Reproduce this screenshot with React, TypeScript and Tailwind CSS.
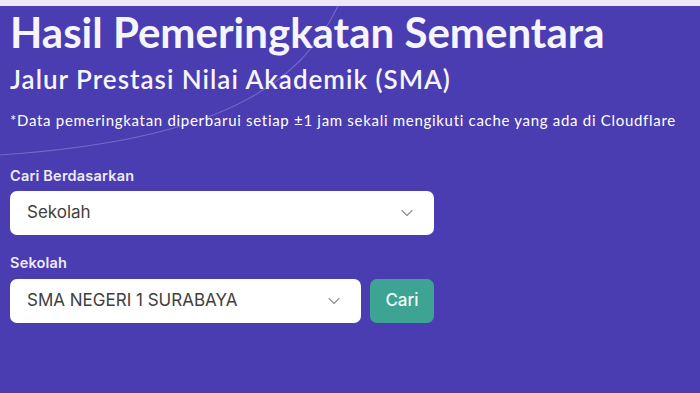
import React from 'react';
import { ChevronDown } from 'lucide-react';

function SelectBox({ value, width }: { value: string; width: string }) {
  return (
    <div className={`${width} h-[44px] bg-white rounded-[7px] flex items-center justify-between pl-[17px] pr-[17px]`}>
      <span className="text-[17px] text-[#404040]" style={{ fontFamily: 'Inter, sans-serif' }}>
        {value}
      </span>
      <ChevronDown size={20} strokeWidth={1.3} className="text-[#8d8d8d]" />
    </div>
  );
}

export default function App() {
  return (
    <div className="w-[700px] h-[393px] overflow-hidden bg-[#4a3cb1] relative">
      <div className="h-[6px] bg-[#ebe8f3]" />

      {/* faint decorative arc */}
      <svg className="absolute left-0 top-0 pointer-events-none" width="700" height="393" viewBox="0 0 700 393">
        <path d="M338 6 C 300 85, 220 140, 0 155" fill="none" stroke="#8f84d6" strokeWidth="1.1" opacity="0.6" />
      </svg>

      <div className="relative px-[10px]">
        <h1
          className="text-[42px] leading-[44px] font-bold text-[#f6f4fc] mt-[4px]"
          style={{ fontFamily: 'Lato, sans-serif' }}
        >
          Hasil Pemeringkatan Sementara
        </h1>
        <h2
          className="text-[26px] leading-[30px] font-semibold text-[#f6f4fc] mt-[10px] tracking-[1px]"
          style={{ fontFamily: 'Lato, sans-serif' }}
        >
          Jalur Prestasi Nilai Akademik (SMA)
        </h2>
        <p
          className="text-[15px] leading-[18px] text-white mt-[17px] tracking-[0.7px]"
          style={{ fontFamily: 'Lato, sans-serif' }}
        >
          *Data pemeringkatan diperbarui setiap ±1 jam sekali mengikuti cache yang ada di Cloudflare
        </p>

        <div className="mt-[38px]" style={{ fontFamily: 'Inter, sans-serif' }}>
          <label className="block text-[14.5px] leading-[18px] font-semibold text-[#eeeaf8] tracking-[0.2px]">
            Cari Berdasarkan
          </label>
          <div className="mt-[6px]">
            <SelectBox value="Sekolah" width="w-[424px]" />
          </div>

          <label className="block text-[14.5px] leading-[18px] font-semibold text-[#eeeaf8] mt-[19px] tracking-[0.2px]">
            Sekolah
          </label>
          <div className="mt-[7px] flex gap-[9px]">
            <SelectBox value="SMA NEGERI 1 SURABAYA" width="w-[351px]" />
            <button className="w-[64px] h-[44px] rounded-[7px] bg-[#3da393] text-[#f2fbf8] text-[17px] font-medium">
              Cari
            </button>
          </div>
        </div>
      </div>
    </div>
  );
}
